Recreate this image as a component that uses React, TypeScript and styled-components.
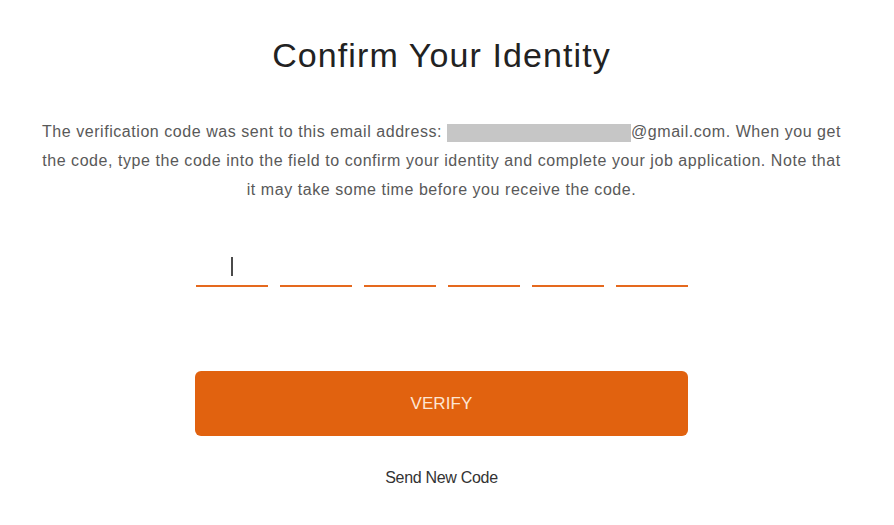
import styled, { createGlobalStyle } from 'styled-components';

const GlobalStyle = createGlobalStyle`
  html, body {
    margin: 0;
    padding: 0;
    background: #ffffff;
  }
  body {
    font-family: "Liberation Sans", Arial, sans-serif;
  }
`;

const CODE_LENGTH = 6;

const App = () => {
  const _renderCells = () => {
    const cells = [];
    for (let i = 0; i < CODE_LENGTH; i++) {
      cells.push(
        <CodeCell key={`cell-${i}`}>{i === 0 && <Caret />}</CodeCell>,
      );
    }
    return cells;
  };

  return (
    <>
      <GlobalStyle />
      <Page>
        <Title>Confirm Your Identity</Title>
        <Message>
          The verification code was sent to this email address:{' '}
          <Redacted />
          @gmail.com. When you get the code, type the code into the field to
          confirm your identity and complete your job application. Note that
          it may take some time before you receive the code.
        </Message>
        <CodeRow>{_renderCells()}</CodeRow>
        <VerifyButton type="button">VERIFY</VerifyButton>
        <ResendLink>Send New Code</ResendLink>
      </Page>
    </>
  );
};

const Page = styled.main`
  display: flex;
  flex-direction: column;
  align-items: center;
  padding: 35px 11px 0 0;
`;

const Title = styled.h1`
  margin: 0;
  font-size: 34px;
  line-height: 40px;
  font-weight: 400;
  letter-spacing: 1.1px;
  color: #222222;
`;

const Message = styled.p`
  margin: 42px 0 0;
  max-width: 806px;
  font-size: 16px;
  line-height: 29px;
  letter-spacing: 0.55px;
  color: #595959;
  text-align: center;
`;

const Redacted = styled.span`
  display: inline-block;
  width: 184px;
  height: 18px;
  vertical-align: -5px;
  background: #c6c6c6;
`;

const CodeRow = styled.div`
  display: flex;
  gap: 12px;
  margin-top: 47px;
`;

const CodeCell = styled.div`
  display: flex;
  align-items: flex-end;
  justify-content: center;
  box-sizing: border-box;
  width: 72px;
  height: 36px;
  padding-bottom: 9px;
  border-bottom: 2px solid #e5691e;
`;

const Caret = styled.span`
  width: 2px;
  height: 19px;
  background: #4a4a4a;
`;

const VerifyButton = styled.button`
  margin-top: 84px;
  width: 493px;
  height: 65px;
  border: none;
  border-radius: 6px;
  background: #e1620f;
  color: #fde6d4;
  font-family: "Liberation Sans", Arial, sans-serif;
  font-size: 17px;
  letter-spacing: 0.1px;
  cursor: pointer;
`;

const ResendLink = styled.a`
  margin-top: 32px;
  font-size: 16px;
  line-height: 20px;
  letter-spacing: -0.3px;
  color: #333333;
  cursor: pointer;
`;

export default App;
